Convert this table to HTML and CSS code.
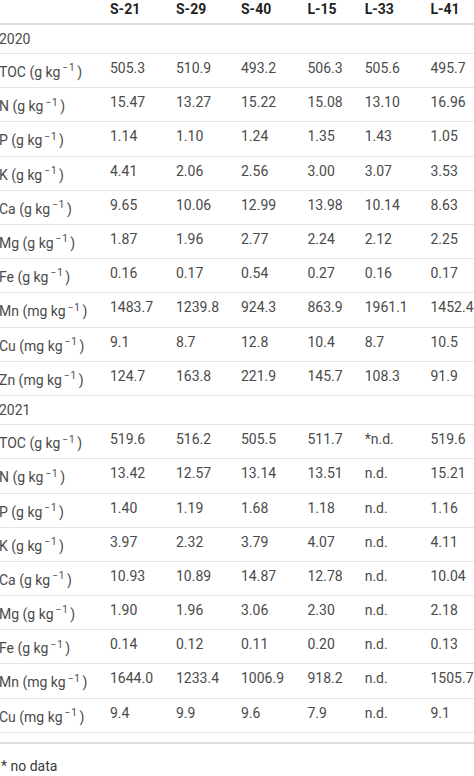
FILE: index.html
```html
<!DOCTYPE html>
<html lang="en">
<head>
<meta charset="utf-8">
<title>Nutrient contents</title>
<link rel="stylesheet" href="styles.css">
</head>
<body>
<div class="frame">
  <div class="scroller">
    <table class="data">
      <colgroup>
        <col class="c-label"><col class="c-s21"><col class="c-s29"><col class="c-s40"><col class="c-l15"><col class="c-l33"><col class="c-l41">
      </colgroup>
      <thead>
        <tr class="head"><th></th><th>S-21</th><th>S-29</th><th>S-40</th><th>L-15</th><th>L-33</th><th>L-41</th></tr>
      </thead>
      <tbody>
        <tr class="year y1"><td>2020</td><td></td><td></td><td></td><td></td><td></td><td></td></tr>
        <tr class="row"><td class="lbl">TOC (g kg<sup>−1</sup>)</td><td>505.3</td><td>510.9</td><td>493.2</td><td>506.3</td><td>505.6</td><td>495.7</td></tr>
        <tr class="row"><td class="lbl">N (g kg<sup>−1</sup>)</td><td>15.47</td><td>13.27</td><td>15.22</td><td>15.08</td><td>13.10</td><td>16.96</td></tr>
        <tr class="row"><td class="lbl">P (g kg<sup>−1</sup>)</td><td>1.14</td><td>1.10</td><td>1.24</td><td>1.35</td><td>1.43</td><td>1.05</td></tr>
        <tr class="row"><td class="lbl">K (g kg<sup>−1</sup>)</td><td>4.41</td><td>2.06</td><td>2.56</td><td>3.00</td><td>3.07</td><td>3.53</td></tr>
        <tr class="row"><td class="lbl">Ca (g kg<sup>−1</sup>)</td><td>9.65</td><td>10.06</td><td>12.99</td><td>13.98</td><td>10.14</td><td>8.63</td></tr>
        <tr class="row"><td class="lbl">Mg (g kg<sup>−1</sup>)</td><td>1.87</td><td>1.96</td><td>2.77</td><td>2.24</td><td>2.12</td><td>2.25</td></tr>
        <tr class="row"><td class="lbl">Fe (g kg<sup>−1</sup>)</td><td>0.16</td><td>0.17</td><td>0.54</td><td>0.27</td><td>0.16</td><td>0.17</td></tr>
        <tr class="row"><td class="lbl">Mn (mg kg<sup>−1</sup>)</td><td>1483.7</td><td>1239.8</td><td>924.3</td><td>863.9</td><td>1961.1</td><td>1452.4</td></tr>
        <tr class="row"><td class="lbl">Cu (mg kg<sup>−1</sup>)</td><td>9.1</td><td>8.7</td><td>12.8</td><td>10.4</td><td>8.7</td><td>10.5</td></tr>
        <tr class="row"><td class="lbl">Zn (mg kg<sup>−1</sup>)</td><td>124.7</td><td>163.8</td><td>221.9</td><td>145.7</td><td>108.3</td><td>91.9</td></tr>
        <tr class="year y2"><td>2021</td><td></td><td></td><td></td><td></td><td></td><td></td></tr>
        <tr class="row"><td class="lbl">TOC (g kg<sup>−1</sup>)</td><td>519.6</td><td>516.2</td><td>505.5</td><td>511.7</td><td>*n.d.</td><td>519.6</td></tr>
        <tr class="row"><td class="lbl">N (g kg<sup>−1</sup>)</td><td>13.42</td><td>12.57</td><td>13.14</td><td>13.51</td><td>n.d.</td><td>15.21</td></tr>
        <tr class="row"><td class="lbl">P (g kg<sup>−1</sup>)</td><td>1.40</td><td>1.19</td><td>1.68</td><td>1.18</td><td>n.d.</td><td>1.16</td></tr>
        <tr class="row"><td class="lbl">K (g kg<sup>−1</sup>)</td><td>3.97</td><td>2.32</td><td>3.79</td><td>4.07</td><td>n.d.</td><td>4.11</td></tr>
        <tr class="row"><td class="lbl">Ca (g kg<sup>−1</sup>)</td><td>10.93</td><td>10.89</td><td>14.87</td><td>12.78</td><td>n.d.</td><td>10.04</td></tr>
        <tr class="row"><td class="lbl">Mg (g kg<sup>−1</sup>)</td><td>1.90</td><td>1.96</td><td>3.06</td><td>2.30</td><td>n.d.</td><td>2.18</td></tr>
        <tr class="row"><td class="lbl">Fe (g kg<sup>−1</sup>)</td><td>0.14</td><td>0.12</td><td>0.11</td><td>0.20</td><td>n.d.</td><td>0.13</td></tr>
        <tr class="row"><td class="lbl">Mn (mg kg<sup>−1</sup>)</td><td>1644.0</td><td>1233.4</td><td>1006.9</td><td>918.2</td><td>n.d.</td><td>1505.7</td></tr>
        <tr class="row"><td class="lbl">Cu (mg kg<sup>−1</sup>)</td><td>9.4</td><td>9.9</td><td>9.6</td><td>7.9</td><td>n.d.</td><td>9.1</td></tr>
      </tbody>
    </table>
  </div>
  <div class="note">* no data</div>
</div>
</body>
</html>
```

FILE: styles.css
```css
html, body {
  margin: 0;
  padding: 0;
  background: #ffffff;
}

.frame {
  width: 474px;
  height: 776px;
  overflow: hidden;
  font-family: Roboto, "Liberation Sans", sans-serif;
  font-size: 14px;
  line-height: 20px;
  color: #4a4a4a;
}

.scroller {
  margin-left: -12px;
  width: 498px;
}

.data {
  table-layout: fixed;
  width: 498px;
  border-collapse: separate;
  border-spacing: 0;
}

.c-label { width: 111px; }
.c-s21 { width: 66px; }
.c-s29 { width: 65px; }
.c-s40 { width: 66.5px; }
.c-l15 { width: 57.2px; }
.c-l33 { width: 65.8px; }
.c-l41 { width: 66.5px; }

.data th,
.data td {
  padding: 4px 11px 0 11px;
  text-align: left;
  vertical-align: top;
  white-space: nowrap;
  border-bottom: 1px solid #e4e4e4;
}

.head { height: 25px; }

.data th {
  padding-top: 0;
  line-height: 18px;
  font-weight: 700;
  color: #1f1f1f;
  border-bottom: 2px solid #dcdcdc;
}

.y1 { height: 29px; }
.y2 { height: 29.3px; }
.row { height: 34.2px; }

.data td.lbl {
  padding-top: 8px;
}

.data sup {
  font-size: 10px;
  line-height: 0;
  vertical-align: super;
  letter-spacing: 1px;
  margin: 0 1.5px 0 2px;
}

.note {
  margin-top: 9.5px;
  border-top: 2px solid #dcdcdc;
  padding: 12px 0 0 1px;
  color: #3a3a3a;
}
```
